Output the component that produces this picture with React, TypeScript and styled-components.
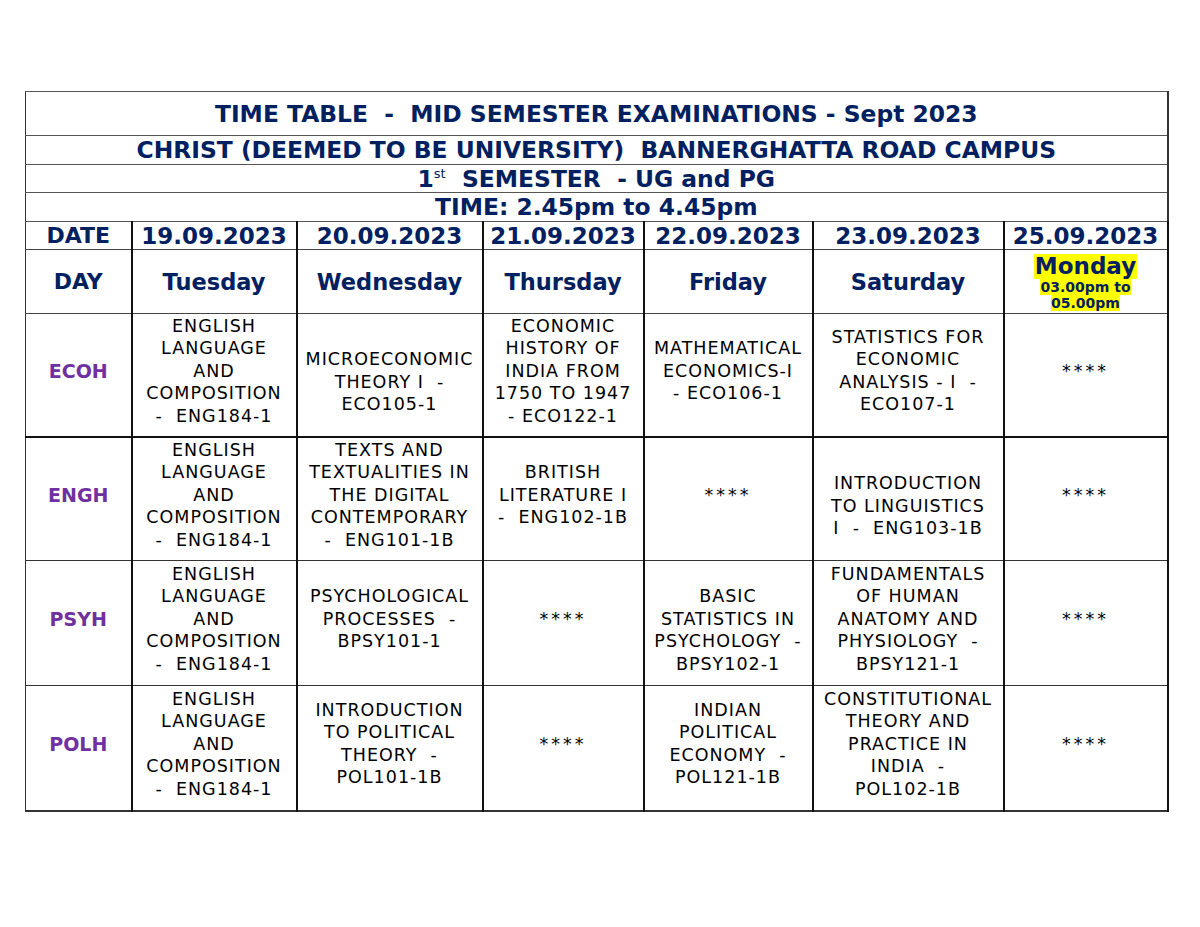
import React from "react";
import styled, { createGlobalStyle } from "styled-components";

const Global = createGlobalStyle`
  html, body { margin: 0; padding: 0; background: #ffffff; }
  body { font-family: "DejaVu Sans", Verdana, sans-serif; }
`;

const Page = styled.div`
  padding: 91px 0 0 25px;
  min-height: 927px;
  box-sizing: border-box;
`;

const Sheet = styled.table`
  width: 1142px;
  table-layout: fixed;
  border-collapse: collapse;
  border: 1px solid #333;
  border-right-width: 2px;
  border-bottom-width: 2px;
`;

const Row = styled.tr<{ $h: number }>`
  height: ${(p) => p.$h}px;
`;

const TitleCell = styled.td`
  padding: 0;
  text-align: center;
  vertical-align: middle;
  font-family: "DejaVu Sans", Verdana, sans-serif;
  font-weight: 700;
  font-size: 23.4px;
  line-height: 26px;
  color: #002060;
  white-space: pre;
  border-bottom: 1px solid #555;
  border-top: 1px solid #555;
`;

const Sup = styled.sup`
  font-size: 13px;
  font-weight: 400;
  vertical-align: 9px;
  line-height: 0;
`;

const HeadCell = styled.td<{ $size: number }>`
  padding: 0;
  text-align: center;
  vertical-align: middle;
  font-family: "DejaVu Sans", Verdana, sans-serif;
  font-weight: 700;
  font-size: ${(p) => p.$size}px;
  line-height: 26px;
  color: #002060;
  white-space: nowrap;
  border-left: 2px solid #111;
  border-right: 2px solid #111;
  border-top: 1px solid #555;
  border-bottom: 1px solid #444;
  &:first-child { border-left: 1px solid #333; }
`;

const Highlight = styled.span`
  background: #ffff00;
`;

const DayStack = styled.div`
  display: flex;
  flex-direction: column;
  align-items: center;
  padding-top: 2px;
`;

const MondayText = styled(Highlight)`
  font-size: 23px;
  line-height: 25px;
  padding: 0 1px;
`;

const SmallTime = styled(Highlight)`
  font-size: 14px;
  line-height: 16px;
`;

const LabelCell = styled.td<{ $thick: boolean }>`
  padding: 0 0 8px;
  text-align: center;
  vertical-align: middle;
  font-family: "DejaVu Sans", Verdana, sans-serif;
  font-weight: 700;
  font-size: 19px;
  color: #7030a0;
  border-left: 1px solid #333;
  border-right: 2px solid #111;
  border-bottom: ${(p) => (p.$thick ? "2px solid #111" : "1px solid #333")};
`;

const SubjectCell = styled.td<{ $thick: boolean }>`
  padding: 0 0 8px;
  text-align: center;
  vertical-align: middle;
  font-family: "DejaVu Sans", Verdana, sans-serif;
  font-weight: 400;
  font-size: 17.5px;
  letter-spacing: 1px;
  line-height: 22.5px;
  color: #000;
  border-left: 2px solid #111;
  border-right: 2px solid #111;
  border-bottom: ${(p) => (p.$thick ? "2px solid #111" : "1px solid #333")};
`;

const Line = styled.div<{ $stars?: boolean }>`
  white-space: pre;
  min-height: 22.5px;
  letter-spacing: ${(p) => (p.$stars ? "3px" : "inherit")};
`;

const widths = [106, 165, 186, 161, 169, 191, 164];
const dates = ["19.09.2023", "20.09.2023", "21.09.2023", "22.09.2023", "23.09.2023", "25.09.2023"];
const days = ["Tuesday", "Wednesday", "Thursday", "Friday", "Saturday"];

const english = ["ENGLISH", "LANGUAGE", "AND", "COMPOSITION", "-  ENG184-1"];
const stars = ["****"];

const rows: { label: string; h: number; cells: string[][] }[] = [
  {
    label: "ECOH",
    h: 123,
    cells: [
      english,
      ["", "MICROECONOMIC", "THEORY I  -", "ECO105-1"],
      ["ECONOMIC", "HISTORY OF", "INDIA FROM", "1750 TO 1947", "- ECO122-1"],
      ["MATHEMATICAL", "ECONOMICS-I", "- ECO106-1"],
      ["STATISTICS FOR", "ECONOMIC", "ANALYSIS - I  -", "ECO107-1"],
      stars,
    ],
  },
  {
    label: "ENGH",
    h: 124,
    cells: [
      english,
      ["TEXTS AND", "TEXTUALITIES IN", "THE DIGITAL", "CONTEMPORARY", "-  ENG101-1B"],
      ["BRITISH", "LITERATURE I", "-  ENG102-1B"],
      stars,
      ["", "INTRODUCTION", "TO LINGUISTICS", "I  -  ENG103-1B"],
      stars,
    ],
  },
  {
    label: "PSYH",
    h: 125,
    cells: [
      english,
      ["PSYCHOLOGICAL", "PROCESSES  -", "BPSY101-1"],
      stars,
      ["", "BASIC", "STATISTICS IN", "PSYCHOLOGY  -", "BPSY102-1"],
      ["FUNDAMENTALS", "OF HUMAN", "ANATOMY AND", "PHYSIOLOGY  -", "BPSY121-1"],
      stars,
    ],
  },
  {
    label: "POLH",
    h: 125,
    cells: [
      english,
      ["INTRODUCTION", "TO POLITICAL", "THEORY  -", "POL101-1B"],
      stars,
      ["INDIAN", "POLITICAL", "ECONOMY  -", "POL121-1B"],
      ["CONSTITUTIONAL", "THEORY AND", "PRACTICE IN", "INDIA  -", "POL102-1B"],
      stars,
    ],
  },
];

export default function App() {
  return (
    <>
      <Global />
      <Page>
        <Sheet>
          <colgroup>
            {widths.map((w, i) => (
              <col key={i} style={{ width: w }} />
            ))}
          </colgroup>
          <tbody>
            <Row $h={44}>
              <TitleCell colSpan={7}>{"TIME TABLE  -  MID SEMESTER EXAMINATIONS - Sept 2023"}</TitleCell>
            </Row>
            <Row $h={29}>
              <TitleCell colSpan={7}>{"CHRIST (DEEMED TO BE UNIVERSITY)  BANNERGHATTA ROAD CAMPUS"}</TitleCell>
            </Row>
            <Row $h={28}>
              <TitleCell colSpan={7}>
                1<Sup>st</Sup>
                {"  SEMESTER  - UG and PG"}
              </TitleCell>
            </Row>
            <Row $h={29}>
              <TitleCell colSpan={7}>{"TIME: 2.45pm to 4.45pm"}</TitleCell>
            </Row>
            <Row $h={28}>
              <HeadCell $size={22}>DATE</HeadCell>
              {dates.map((d) => (
                <HeadCell key={d} $size={23}>
                  {d}
                </HeadCell>
              ))}
            </Row>
            <Row $h={64}>
              <HeadCell $size={22}>DAY</HeadCell>
              {days.map((d) => (
                <HeadCell key={d} $size={22.5}>
                  {d}
                </HeadCell>
              ))}
              <HeadCell $size={23}>
                <DayStack>
                  <MondayText>Monday</MondayText>
                  <SmallTime>03.00pm to</SmallTime>
                  <SmallTime>05.00pm</SmallTime>
                </DayStack>
              </HeadCell>
            </Row>
            {rows.map((r, ri) => (
              <Row key={r.label} $h={r.h}>
                <LabelCell $thick={ri === 0}>{r.label}</LabelCell>
                {r.cells.map((lines, ci) => (
                  <SubjectCell key={ci} $thick={ri === 0}>
                    {lines.map((l, li) => (
                      <Line key={li} $stars={l === "****"}>
                        {l}
                      </Line>
                    ))}
                  </SubjectCell>
                ))}
              </Row>
            ))}
          </tbody>
        </Sheet>
      </Page>
    </>
  );
}
